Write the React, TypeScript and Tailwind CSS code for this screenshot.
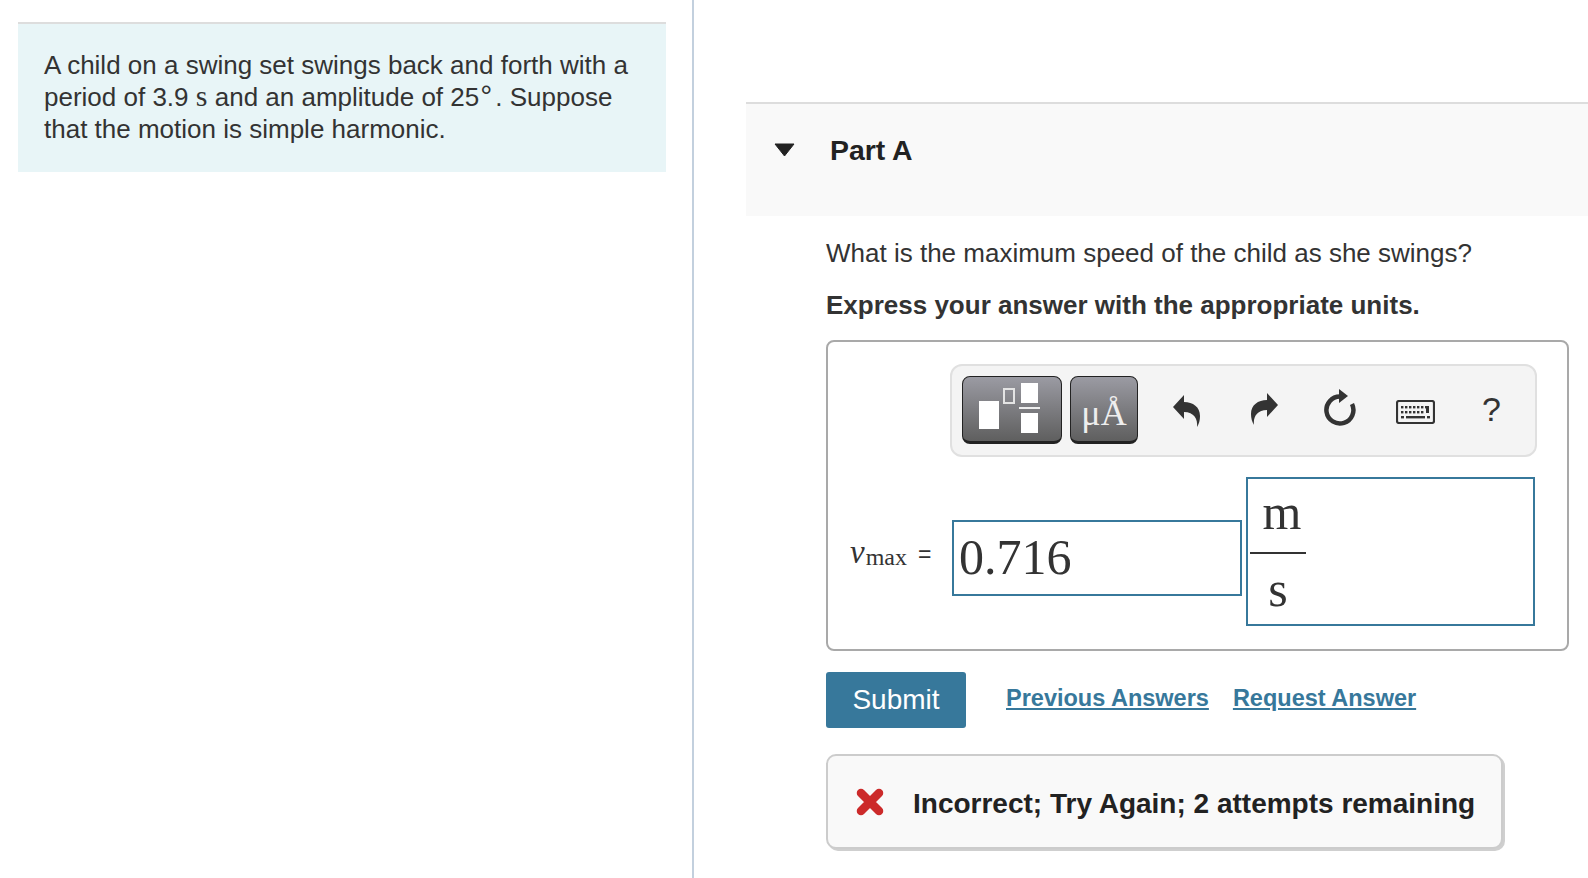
import React from "react";

const Undo = ({ flip }: { flip?: boolean }) => (
  <svg width="28" height="32" viewBox="0 0 28 32" className={flip ? "-scale-x-100" : ""}>
    <path d="M0 12 L11 0 V7 C20 7 27 12 27 21 C27 25 26 29 24 32 C25 24 21 17 11 17 V24 Z" fill="#333" />
  </svg>
);

const Reload = () => (
  <svg width="34" height="38" viewBox="0 0 34 38">
    <path d="M17 7.5 A13.5 13.5 0 1 0 29 15" fill="none" stroke="#333" strokeWidth="4.5" />
    <path d="M16 0 L25 7 L16 14 Z" fill="#333" />
  </svg>
);

const Keyboard = () => (
  <svg width="39" height="24" viewBox="0 0 39 24">
    <rect x="1" y="1" width="37" height="22" rx="2" fill="#f4f4f4" stroke="#333" strokeWidth="2.2" />
    <g fill="#333">
      {[5, 9, 13, 17, 21, 25, 29].map((x) => (
        <rect key={x} x={x} y="6" width="2.4" height="2.4" />
      ))}
      {[5, 9, 13, 17, 21, 25].map((x) => (
        <rect key={x} x={x} y="11" width="2.4" height="2.4" />
      ))}
      <rect x="30" y="6" width="3" height="7" />
      <rect x="5" y="16" width="3" height="2.4" />
      <rect x="10" y="16" width="19" height="2.4" />
      <rect x="31" y="16" width="3" height="2.4" />
    </g>
  </svg>
);

const Templates = () => (
  <svg width="62" height="52" viewBox="0 0 62 52">
    <rect x="0" y="18" width="20" height="28" fill="#fff" />
    <rect x="25" y="6" width="10" height="14" fill="none" stroke="#e4e4e4" strokeWidth="2" />
    <rect x="42" y="0" width="17" height="20" fill="#fff" />
    <rect x="40" y="24" width="21" height="2" fill="#eee" />
    <rect x="42" y="30" width="17" height="20" fill="#fff" />
  </svg>
);

const RedX = () => (
  <svg width="28" height="28" viewBox="0 0 28 28">
    <path d="M5 5 L23 23 M23 5 L5 23" stroke="#cc2a2a" strokeWidth="8.5" strokeLinecap="round" />
  </svg>
);

export default function App() {
  return (
    <div className="flex h-[878px] w-[1588px] overflow-hidden bg-white font-['Liberation_Sans',Arial,sans-serif] text-[#333]">
      <div className="w-[694px] shrink-0 border-r-2 border-[#c3d0de] pl-[18px] pr-[26px] pt-[22px]">
        <div className="h-[150px] border-t-2 border-[#dddddd] bg-[#e8f5f7] px-[26px] pt-[25px] text-[26px] leading-[32px]">
          A child on a swing set swings back and forth with a period of 3.9{" "}
          <span className="font-['Liberation_Serif',serif] text-[30px] leading-none">s</span> and an amplitude of 25
          <span className="ml-[1px] text-[30px] leading-none">°</span>
          <span className="ml-[3px]">. Suppose that the motion is simple harmonic.</span>
        </div>
      </div>

      <div className="min-w-0 flex-1 pl-[52px] pt-[102px]">
        <div className="flex h-[114px] items-start border-t-2 border-[#dddddd] bg-[#f9f9f9] pl-[28px] pt-[28px]">
          <svg width="21" height="14" viewBox="0 0 21 14" className="mt-[11px]">
            <path d="M1 1 H20 L10.5 13 Z" fill="#222" stroke="#222" strokeLinejoin="round" />
          </svg>
          <div className="ml-[35px] text-[28.4px] font-bold leading-[36px] text-[#222]">Part A</div>
        </div>

        <div className="pl-[80px]">
          <p className="mt-[21px] text-[26px] leading-[32px]">
            What is the maximum speed of the child as she swings?
          </p>
          <p className="mt-[20px] text-[26px] font-bold leading-[32px]">
            Express your answer with the appropriate units.
          </p>

          <div className="mt-[19px] h-[311px] w-[743px] rounded-lg border-2 border-[#a9a9a9] pt-[22px]">
            <div className="ml-[122px] flex h-[93px] w-[587px] items-center rounded-[12px] border-2 border-[#e0e0e0] bg-[#f4f4f4] pb-[1px] pl-[10px]">
              <div className="flex h-[68px] w-[100px] items-center justify-center rounded-lg border border-b-[3px] border-[#222] bg-gradient-to-b from-[#9b9ba3] to-[#5f5f5f] pr-[4px]">
                <Templates />
              </div>
              <div className="ml-[8px] flex h-[68px] w-[68px] items-end justify-center rounded-lg border border-b-[3px] border-[#222] bg-gradient-to-b from-[#9b9ba3] to-[#5f5f5f] pb-[8px] font-['Liberation_Serif',serif] text-[36px] leading-[40px] text-[#eeeeee]">
                μÅ
              </div>
              <div className="ml-[35px] mt-[2px]"><Undo /></div>
              <div className="ml-[49px] mt-[-2px]"><Undo flip /></div>
              <div className="ml-[45px] mt-[-4px]"><Reload /></div>
              <div className="ml-[39px] mt-[4px]"><Keyboard /></div>
              <div className="ml-[47px] mt-[-3px] text-[34px] leading-[40px]">?</div>
            </div>

            <div className="mt-[20px] flex items-start pl-[22px]">
              <div className="mt-[59px] flex w-[102px] items-baseline font-['Liberation_Serif',serif] leading-[32px]">
                <span className="text-[33px] italic">v</span>
                <span className="ml-[1px] translate-y-[2px] text-[24px]">max</span>
                <span className="ml-[11px] translate-y-[-1px] font-['Liberation_Sans',sans-serif] text-[23px]">=</span>
              </div>
              <div className="mt-[43px] flex h-[76px] w-[290px] items-center border-2 border-[#37789b] pb-[2px] pl-[5px] font-['Liberation_Serif',serif] text-[50px] leading-[60px]">
                0.716
              </div>
              <div className="ml-[4px] h-[149px] w-[289px] border-2 border-[#37789b] pl-[2px] font-['Liberation_Serif',serif] text-[50px]">
                <div className="flex w-[56px] flex-col">
                  <div className="flex h-[73px] items-center justify-center pb-[8px] pl-[8px] leading-[50px]">m</div>
                  <div className="h-[2px] bg-[#333]" />
                  <div className="flex h-[70px] items-center justify-center leading-[50px]">s</div>
                </div>
              </div>
            </div>
          </div>

          <div className="mt-[21px] flex items-start">
            <div className="flex h-[56px] w-[140px] items-center justify-center rounded-[3px] bg-[#37789b] text-[28px] text-white">
              Submit
            </div>
            <a className="ml-[40px] mt-[10px] text-[23.5px] font-bold leading-[32px] text-[#37789b] underline">
              Previous Answers
            </a>
            <a className="ml-[24px] mt-[10px] text-[23.5px] font-bold leading-[32px] text-[#37789b] underline">
              Request Answer
            </a>
          </div>

          <div className="mt-[26px] flex h-[95px] w-[677px] items-center rounded-[10px] border-2 border-[#cccccc] bg-[#f9f9f9] pl-[28px] shadow-[2px_2px_0_#cfcfcf]">
            <RedX />
            <div className="ml-[29px] mt-[5px] whitespace-nowrap text-[28px] font-bold leading-[36px] text-[#222]">
              Incorrect; Try Again; 2 attempts remaining
            </div>
          </div>
        </div>
      </div>
    </div>
  );
}
